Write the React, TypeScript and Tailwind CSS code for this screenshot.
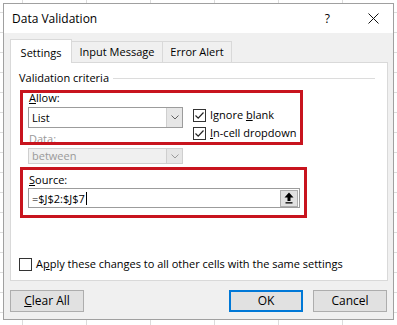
const FONT = "font-['Segoe_UI','Open_Sans',sans-serif]"

function CheckBox({ checked }: { checked?: boolean }) {
  return (
    <span className="flex h-[13px] w-[13px] shrink-0 items-center justify-center border border-[#333] bg-white">
      {checked && (
        <svg width="11" height="11" viewBox="0 0 11 11">
          <path d="M1.5 5.5 L4.2 8.2 L9.5 2.5" fill="none" stroke="#222" strokeWidth="1.2" />
        </svg>
      )}
    </span>
  )
}

function Chevron({ color = "#606060" }: { color?: string }) {
  return (
    <svg width="8" height="5" viewBox="0 0 8 5">
      <path d="M0.5 0.5 L4 4 L7.5 0.5" fill="none" stroke={color} strokeWidth="1" />
    </svg>
  )
}

function Select({ value, disabled }: { value: string; disabled?: boolean }) {
  return (
    <div
      className={
        disabled
          ? "flex h-[16px] w-[155px] border border-[#cfcfcf] bg-[#f0f0f0]"
          : "flex h-[21px] w-[155px] border border-[#9c9c9c] bg-white"
      }
    >
      <span
        className={
          disabled
            ? "flex flex-1 items-center pl-[3px] text-[#9a9a9a]"
            : "flex flex-1 items-center pl-[3px] text-black"
        }
      >
        {value}
      </span>
      <span className="flex w-[16px] items-center justify-center border-l border-[#cfcfcf] bg-[#e6e6e6]">
        <Chevron color={disabled ? "#9a9a9a" : "#606060"} />
      </span>
    </div>
  )
}

function Button({ label, accel, rest, primary }: { label?: string; accel?: string; rest?: string; primary?: boolean }) {
  return (
    <button
      type="button"
      className={
        primary
          ? "flex h-[22px] w-[74px] items-center justify-center border-2 border-[#0078d7] bg-[#e1e1e1] text-[12px] text-black"
          : "flex h-[22px] w-[74px] items-center justify-center border border-[#adadad] bg-[#e1e1e1] text-[12px] text-black"
      }
    >
      {accel && <span className="underline underline-offset-1">{accel}</span>}
      {rest}
      {label}
    </button>
  )
}

export default function App() {
  return (
    <div
      className={`h-[325px] w-[397px] overflow-hidden bg-white bg-[linear-gradient(to_right,#dcdcdc_1px,transparent_1px),linear-gradient(to_bottom,#dcdcdc_1px,transparent_1px)] bg-[length:64px_20px,64px_20px] bg-[position:22px_0,0_12px] pl-[3px] pt-[3px] text-[11px] leading-[16px] text-black ${FONT}`}
    >
      <div className="flex h-[317px] w-[391px] flex-col border border-[#a0a0a0] bg-[#f0f0f0]">
        {/* title bar */}
        <div className="flex h-[29px] items-center bg-white pl-[8px]">
          <span className="flex-1 text-[12px]">Data Validation</span>
          <span className="mr-[38px] text-[12px]">?</span>
          <svg className="mr-[14px]" width="11" height="11" viewBox="0 0 11 11">
            <path d="M0.5 0.5 L10.5 10.5 M10.5 0.5 L0.5 10.5" stroke="#111" strokeWidth="1" />
          </svg>
        </div>

        <div className="flex flex-1 flex-col px-[6px] pt-[6px]">
          {/* tabs */}
          <div className="flex items-end">
            <div className="relative z-10 -mb-px flex h-[24px] w-[62px] items-start justify-center border border-b-0 border-[#d9d9d9] bg-white pt-[5px]">
              Settings
            </div>
            <div className="flex h-[21px] w-[91px] items-center justify-center border-t border-r border-[#d9d9d9]">
              Input Message
            </div>
            <div className="flex h-[21px] w-[69px] items-center justify-center border-t border-r border-[#d9d9d9]">
              Error Alert
            </div>
          </div>

          {/* tab panel */}
          <div className="relative flex h-[219px] w-[378px] flex-col border border-[#d9d9d9] bg-white px-[8px] pt-[7px]">
            <div className="flex items-center gap-[4px] pr-[4px]">
              <span>Validation criteria</span>
              <span className="h-px flex-1 bg-[#dcdcdc]" />
            </div>

            <div className="mt-[4px] flex pl-[9px]">
              <div className="flex flex-col">
                <span className="pl-px">
                  <span className="underline underline-offset-1">A</span>llow:
                </span>
                <div className="mt-px">
                  <Select value="List" />
                </div>
                <span className="mt-[3px] pl-px text-[#9a9a9a]">Data:</span>
                <div className="mt-px">
                  <Select value="between" disabled />
                </div>
              </div>
              <div className="ml-[10px] flex flex-col gap-[2px] pt-[17px]">
                <label className="flex items-center gap-[4px]">
                  <CheckBox checked />
                  <span>
                    Ignore <span className="underline underline-offset-1">b</span>lank
                  </span>
                </label>
                <label className="flex items-center gap-[4px]">
                  <CheckBox checked />
                  <span>
                    <span className="underline underline-offset-1">I</span>n-cell dropdown
                  </span>
                </label>
              </div>
            </div>

            <span className="mt-[8px] pl-[10px]">
              <span className="underline underline-offset-1">S</span>ource:
            </span>
            <div className="ml-[9px] flex h-[20px] w-[272px] items-center border border-[#9c9c9c] bg-white pl-[3px] pr-px">
              <span className="flex-1">
                =$J$2:$J$7<span className="ml-px inline-block h-[13px] w-px translate-y-[2px] bg-black" />
              </span>
              <span className="flex h-[17px] w-[18px] items-center justify-center border border-[#adadad] bg-[#e1e1e1]">
                <svg width="10" height="12" viewBox="0 0 10 12">
                  <path d="M5 0.5 L9.5 5.5 L6.5 5.5 L6.5 9 L3.5 9 L3.5 5.5 L0.5 5.5 Z" fill="#000" />
                  <rect x="1.5" y="10.2" width="7" height="1.3" fill="#000" />
                </svg>
              </span>
            </div>

            <label className="mt-[48px] flex items-center gap-[4px]">
              <CheckBox />
              <span>
                A<span className="underline underline-offset-1">p</span>ply these changes to all other cells with the same settings
              </span>
            </label>

            {/* annotation boxes */}
            <div className="pointer-events-none absolute left-[9px] top-[27px] h-[55px] w-[283px] border-[3px] border-[#c8141e]" />
            <div className="pointer-events-none absolute left-[9px] top-[104px] h-[51px] w-[287px] border-[3px] border-[#c8141e]" />
          </div>

          {/* buttons */}
          <div className="mt-[9px] flex items-center">
            <Button accel="C" rest="lear All" />
            <div className="flex-1" />
            <div className="flex gap-[10px]">
              <Button label="OK" primary />
              <Button label="Cancel" />
            </div>
          </div>
        </div>
      </div>
    </div>
  )
}
